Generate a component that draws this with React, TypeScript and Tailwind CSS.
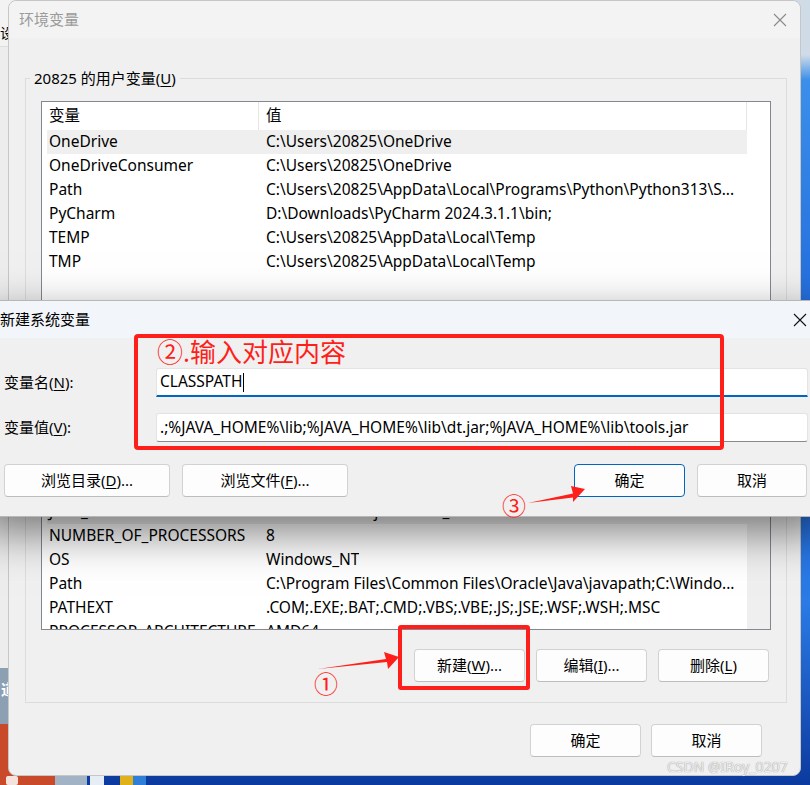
import React from 'react'

const uiFont = "font-['Noto_Sans','Noto_Sans_CJK_SC',sans-serif]"

type Row = [string, string]

const userRows: Row[] = [
  ['OneDrive', 'C:\\Users\\20825\\OneDrive'],
  ['OneDriveConsumer', 'C:\\Users\\20825\\OneDrive'],
  ['Path', 'C:\\Users\\20825\\AppData\\Local\\Programs\\Python\\Python313\\S...'],
  ['PyCharm', 'D:\\Downloads\\PyCharm 2024.3.1.1\\bin;'],
  ['TEMP', 'C:\\Users\\20825\\AppData\\Local\\Temp'],
  ['TMP', 'C:\\Users\\20825\\AppData\\Local\\Temp'],
]

const systemRows: Row[] = [
  ['ComSpec', 'C:\\Windows\\system32\\cmd.exe'],
  ['DriverData', 'C:\\Windows\\System32\\Drivers\\DriverData'],
  ['HADOOP_HOME', 'D:\\Downloads\\hadoop'],
  ['JAVA', 'D:\\Downloads\\java'],
  ['JAVA_HOME', 'D:\\Downloads\\java 1.8.0_241'],
  ['NUMBER_OF_PROCESSORS', '8'],
  ['OS', 'Windows_NT'],
  ['Path', 'C:\\Program Files\\Common Files\\Oracle\\Java\\javapath;C:\\Windo...'],
  ['PATHEXT', '.COM;.EXE;.BAT;.CMD;.VBS;.VBE;.JS;.JSE;.WSF;.WSH;.MSC'],
  ['PROCESSOR_ARCHITECTURE', 'AMD64'],
]

const CloseIcon = ({ color }: { color: string }) => (
  <svg width="16" height="16" viewBox="0 0 16 16">
    <path d="M2 2 L14 14 M14 2 L2 14" stroke={color} strokeWidth="1.1" fill="none" />
  </svg>
)

const Btn = ({ children, className, primary }: { children: React.ReactNode; className: string; primary?: boolean }) => (
  <div
    className={`flex items-center justify-center rounded-[4px] border bg-[#fdfdfd] text-[15px] text-black ${
      primary ? 'border-[#0067c0]' : 'border-[#d2d2d2] border-b-[#bdbdbd]'
    } ${className}`}
  >
    {children}
  </div>
)

const ListBox = ({ rows, selected, className, scroll }: { rows: Row[]; selected: number; className: string; scroll?: boolean }) => (
  <div className={`flex overflow-hidden border border-[#828790] bg-white text-[15.5px] ${className}`}>
    <div className="w-[705px] shrink-0 pl-[5px]">
      <div className="flex h-[28px] items-center border-r border-[#e5e5e5]">
        <div className="flex h-full w-[212px] items-center border-r border-[#e5e5e5] pl-[2px]">变量</div>
        <div className="pl-[7px]">值</div>
      </div>
      {rows.map(([name, value], i) => (
        <div key={name + i} className={`flex h-[24px] items-center ${i === selected ? 'bg-[#efefef]' : ''}`}>
          <div className="w-[212px] shrink-0 truncate pl-[2px]">{name}</div>
          <div className="truncate whitespace-nowrap pl-[7px]">{value}</div>
        </div>
      ))}
    </div>
    <div className={`flex-1 ${scroll ? 'bg-[#efefef]' : ''}`} />
  </div>
)

export default function App() {
  return (
    <div className={`relative h-[785px] w-[810px] overflow-hidden bg-[linear-gradient(180deg,#cfdbe7_0px,#cfdbe7_55px,#3b8fe9_80px,#1c62d8_380px,#2b7be6_600px,#0c3a9e_785px)] text-[15px] text-black ${uiFont}`}>
      {/* desktop behind */}
      <div className="absolute left-0 top-0 h-[668px] w-[24px] bg-[#ededed]">
        <div className="h-[47px] border-b border-[#dedede] bg-[#f3f3f3] pt-[26px] text-[14px] leading-none">设</div>
      </div>
      <div className="absolute left-0 top-[668px] h-[56px] w-[24px] bg-[#8d9fb3] pl-[1px] pt-[14px] text-[15px] font-bold leading-none text-white">道</div>
      <div className="absolute left-0 top-[724px] h-[61px] w-[60px] bg-[#c94a2b]" />
      <div className="absolute left-[6px] top-[776px] h-[9px] w-[12px] rounded-[2px] bg-[#f4e3dc]" />
      <div className="absolute left-[55px] top-[775px] h-[10px] w-[32px] bg-[#a3b3c6]" />
      <div className="absolute left-[90px] top-[776px] h-[9px] w-[14px] bg-[#e6edf5]" />
      <div className="absolute left-[120px] top-[775px] h-[10px] w-[13px] bg-[#e0b21a]" />
      <div className="absolute left-[133px] top-[775px] h-[10px] w-[13px] bg-[#2f7fd8]" />

      {/* Environment variables window */}
      <div className="absolute left-[8px] top-0 flex h-[776px] w-[793px] flex-col rounded-[8px] border border-[#c6c6c6] bg-[#f0f0f0]">
        <div className="flex h-[37px] shrink-0 items-center justify-between rounded-t-[8px] bg-[#f3f3f3] pl-[10px] pr-[12px]">
          <span className="text-[15px] text-[#9b9b9b]">环境变量</span>
          <CloseIcon color="#8a8a8a" />
        </div>
        <div className="flex flex-col pl-[16px] pr-[13px]">
          <div className="relative mt-[40px] h-[262px] border border-[#dcdcdc]">
            <span className="absolute left-[4px] top-[-12px] bg-[#f0f0f0] px-[4px] leading-[22px]">
              20825 的用户变量(<u className="underline-offset-2">U</u>)
            </span>
            <ListBox rows={userRows} selected={0} className="ml-[15px] mr-[15px] mt-[22px] h-[221px]" />
          </div>
          <div className="relative mt-[12px] h-[351px] border border-[#dcdcdc]">
            <span className="absolute left-[4px] top-[-12px] bg-[#f0f0f0] px-[4px] leading-[22px]">
              系统变量(<u className="underline-offset-2">S</u>)
            </span>
            <ListBox rows={systemRows} selected={4} scroll className="ml-[15px] mr-[15px] mt-[22px] h-[255px]" />
            <div className="mt-[19px] flex justify-end gap-[11px] pr-[17px]">
              <Btn className="h-[33px] w-[111px]">
                新建(<u className="underline-offset-2">W</u>)...
              </Btn>
              <Btn className="h-[33px] w-[111px]">
                编辑(<u className="underline-offset-2">I</u>)...
              </Btn>
              <Btn className="h-[33px] w-[111px]">
                删除(<u className="underline-offset-2">L</u>)
              </Btn>
            </div>
          </div>
          <div className="mt-[21px] flex justify-end gap-[10px] pr-[25px]">
            <Btn className="h-[33px] w-[111px]">确定</Btn>
            <Btn className="h-[33px] w-[111px]">取消</Btn>
          </div>
        </div>
      </div>

      {/* New system variable dialog */}
      <div className="absolute left-[-20px] top-[300px] h-[217px] w-[848px] border border-[#b7b7b7] bg-[#f0f0f0] shadow-[0_16px_42px_rgba(0,0,0,0.5)]">
        <div className="flex h-[37px] items-center justify-between bg-[#f2f5fa] pl-[19px] pr-[19px]">
          <span>新建系统变量</span>
          <CloseIcon color="#111" />
        </div>
        <div className="pl-[23px] pr-[19px]">
          <div className="mt-[30px] grid grid-cols-[152px_1fr] items-center gap-y-[16px]">
            <div>
              变量名(<u className="underline-offset-2">N</u>):
            </div>
            <div className="flex h-[29px] items-center rounded-t-[3px] border border-[#e3e3e3] border-b-2 border-b-[#0067c0] bg-white pl-[3px] text-[15.5px]">
              CLASSPATH<span className="ml-[1px] inline-block h-[19px] w-px bg-black" />
            </div>
            <div>
              变量值(<u className="underline-offset-2">V</u>):
            </div>
            <div className="flex h-[29px] items-center rounded-[3px] border border-[#e3e3e3] border-b-[#8a8a8a] bg-white pl-[3px] text-[15.5px]">
              .;%JAVA_HOME%\lib;%JAVA_HOME%\lib\dt.jar;%JAVA_HOME%\lib\tools.jar
            </div>
          </div>
          <div className="mt-[22px] flex gap-[12px]">
            <Btn className="h-[33px] w-[166px]">
              浏览目录(<u className="underline-offset-2">D</u>)...
            </Btn>
            <Btn className="h-[33px] w-[166px]">
              浏览文件(<u className="underline-offset-2">F</u>)...
            </Btn>
            <Btn primary className="ml-auto h-[33px] w-[111px]">
              确定
            </Btn>
            <Btn className="mr-[1px] h-[33px] w-[110px]">取消</Btn>
          </div>
        </div>
      </div>

      {/* red annotations */}
      <div className="absolute left-[134px] top-[334px] h-[116px] w-[590px] rounded-[4px] border-[4px] border-[#ff1f1a]" />
      <div className="absolute left-[157px] top-[339px] text-[26px] leading-none text-[#ff1f1a]">②.输入对应内容</div>
      <div className="absolute left-[398px] top-[625px] h-[65px] w-[132px] rounded-[3px] border-[4px] border-[#ff1f1a]" />
      <div className="absolute left-[314px] top-[672px] text-[24px] leading-none text-[#ff1f1a]">①</div>
      <div className="absolute left-[502px] top-[494px] text-[24px] leading-none text-[#ff1f1a]">③</div>
      <svg className="pointer-events-none absolute left-0 top-0" width="810" height="785">
        <path d="M318 669 L386 659 L384 652 L399 657 L388 669 L387 662 Z" fill="#ff1f1a" />
        <path d="M528 503 L573 493.5 L571 486 L585 489 L573 502 L573 497.5 Z" fill="#ff1f1a" />
      </svg>

      <div className="absolute left-[667px] top-[760px] text-[14px] leading-none text-[#eeeeee] [text-shadow:0_0_1px_#777]">
        CSDN @IRoy_0207
      </div>
    </div>
  )
}
